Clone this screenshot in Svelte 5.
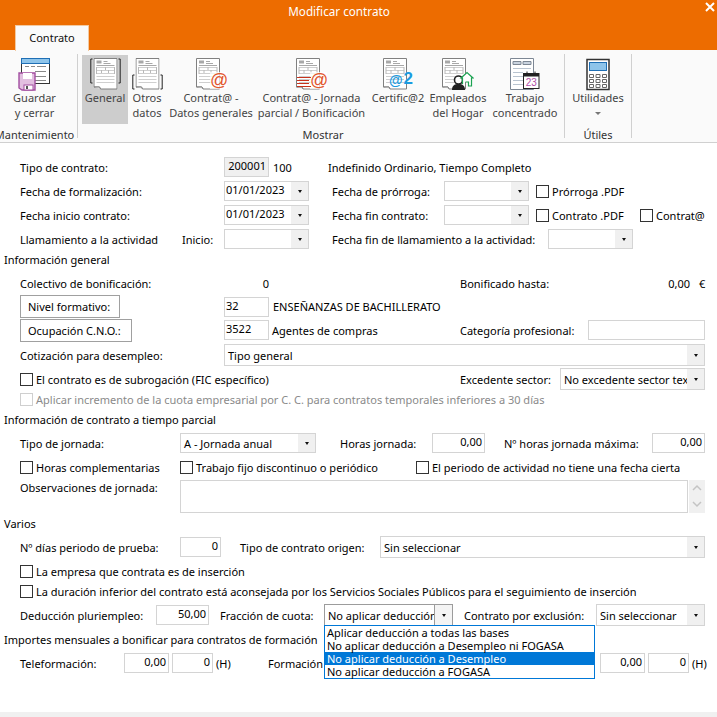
<script>
  const docLines = [9, 12, 15, 18, 21, 24];
  const options = [
    'Aplicar deducción a todas las bases',
    'No aplicar deducción a Desempleo ni FOGASA',
    'No aplicar deducción a Desempleo',
    'No aplicar deducción a FOGASA'
  ];
  let selected = 2;
</script>

{#snippet combo(value, cls)}
  <div class="combo {cls}">
    <span class="val">{value}</span>
    <span class="arr"><i></i></span>
  </div>
{/snippet}

{#snippet check(label, cls = '', disabled = false)}
  <label class="check {cls}" class:off={disabled}>
    <input type="checkbox" {disabled} />
    <span>{label}</span>
  </label>
{/snippet}

<svg class="defs" aria-hidden="true">
  <symbol id="doc" viewBox="0 0 24 32">
    <path d="M.5.5h23v30.500H7l-1-2H.5z" fill="#fff" stroke="#808080" />
    <path d="M.5 29H6l1 2" fill="#e8e8e8" stroke="#808080" />
    <rect x="3" y="2.500" width="5" height="3" fill="#a8a8a8" />
    <path d="M10 3.500h4M10 5.500h7M3 7.500h18" stroke="#a8a8a8" />
    {#each docLines as y}
      <path d="M3 {y + 0.5}h18" stroke="#cfcfcf" />
    {/each}
    <path d="M3 9v7M21 9v7M12 9v3M8 12v3M15 12v3" stroke="#b8b8b8" />
  </symbol>
</svg>

<div class="app">
  <header class="top">
    <div class="title">Modificar contrato</div>
    <svg class="close" viewBox="0 0 10 10" aria-label="Cerrar">
      <path d="M1 1l8 8M9 1l-8 8" stroke="#fff" stroke-width="2" />
    </svg>
    <div class="tabs"><div class="tab">Contrato</div></div>
  </header>

  <section class="ribbon">
    <div class="group g-mant">
      <div class="btns">
        <div class="rb b-guardar">
          <svg width="33" height="34" viewBox="0 0 33 34">
            <rect x="3.500" y="1.500" width="28" height="25" fill="#fff" stroke="#333" />
            <rect x="3.500" y="1.500" width="28" height="5" fill="#8ec4ea" stroke="#1f6fb5" />
            <path d="M7 9.500h4M13 9.500h4M19 9.500h9M17 14.500h11M17 19.500h11M17 23.500h11" stroke="#888" />
            <path d="M1 16h16v17H4l-3-2z" fill="#e2bfe0" stroke="#a24ea0" stroke-width="1.400" />
            <rect x="5" y="16" width="9" height="6" fill="#fff" />
            <rect x="6" y="28" width="9" height="5" fill="#fff" stroke="#a24ea0" />
            <rect x="8" y="29" width="2" height="3" fill="#555" />
          </svg>
          <span>Guardar<br />y cerrar</span>
        </div>
      </div>
      <div class="glabel">Mantenimiento</div>
    </div>

    <div class="group g-most">
      <div class="btns">
        <div class="rb b-general active">
          <svg width="31" height="34" viewBox="0 0 31 34">
            <use href="#doc" x="3.500" y="1" width="24" height="32" />
            <path d="M2.500 2H.8v24h1.700M28.500 2h1.700v24h-1.700" fill="none" stroke="#222" />
          </svg>
          <span>General</span>
        </div>
        <div class="rb b-otros">
          <svg width="31" height="34" viewBox="0 0 31 34">
            <use href="#doc" x="3.500" y="1" width="24" height="32" />
            <path d="M2.500 18H.8v14h1.700M28.500 18h1.700v14h-1.700" fill="none" stroke="#222" />
          </svg>
          <span>Otros<br />datos</span>
        </div>
        <div class="rb b-datos">
          <svg width="31" height="34" viewBox="0 0 31 34">
            <use href="#doc" x="0" y="1" width="24" height="32" />
            <rect x="14" y="15" width="17" height="17" fill="#fff" opacity=".7" />
            <text x="14" y="29" class="at">@</text>
          </svg>
          <span>Contrat@ -<br />Datos generales</span>
        </div>
        <div class="rb b-jornada">
          <svg width="31" height="34" viewBox="0 0 31 34">
            <use href="#doc" x="0" y="1" width="24" height="32" />
            <rect x="14" y="15" width="17" height="17" fill="#fff" opacity=".7" />
            <path d="M1 20.500h14M1 23.500h12M1 26.500h12M1 29.500h14" stroke="#c8331d" />
            <text x="14" y="29" class="at">@</text>
          </svg>
          <span>Contrat@ - Jornada<br />parcial / Bonificación</span>
        </div>
        <div class="rb b-cert">
          <svg width="31" height="34" viewBox="0 0 31 34">
            <use href="#doc" x="0" y="1" width="24" height="32" />
            <text x="6" y="28" class="at2">@</text>
            <text x="20.500" y="27" class="two">2</text>
          </svg>
          <span>Certific@2</span>
        </div>
        <div class="rb b-emp">
          <svg width="32" height="34" viewBox="0 0 32 34">
            <use href="#doc" x="0" y="1" width="24" height="32" />
            <circle cx="16.500" cy="23" r="4" fill="#fff" stroke="#222" stroke-width="1.600" />
            <path d="M10 33c0-5 3-6 6.500-6s6.500 1 6.500 6z" fill="#222" />
            <path d="M20.500 27v-6H19l6-5.500 6 5.500h-1.500v8h-3v-4h-3" fill="#fff" stroke="#1aa251" stroke-width="1.200" />
          </svg>
          <span>Empleados<br />del Hogar</span>
        </div>
        <div class="rb b-trab">
          <svg width="30" height="34" viewBox="0 0 30 34">
            <path d="M.5 1.500h23v31H.5z" fill="#fff" stroke="#7d8794" />
            <path d="M3 4.500h8v3H3zM13 4.500h8v3h-8z" fill="#c9d3df" stroke="#7d8794" />
            <path d="M3 11.500h18M3 15.500h10M3 19.500h10M3 23.500h10M3 27.500h10" stroke="#b9c4d0" />
            <rect x="13.500" y="16.500" width="15.500" height="15" fill="#fff" stroke="#222" />
            <rect x="13.500" y="16.500" width="15.500" height="3" fill="#222" />
            <path d="M17 14.500v3M25 14.500v3" stroke="#222" />
            <text x="21.300" y="29" class="cal">23</text>
          </svg>
          <span>Trabajo<br />concentrado</span>
        </div>
      </div>
      <div class="glabel">Mostrar</div>
    </div>

    <div class="group g-util">
      <div class="btns">
        <div class="rb b-util">
          <svg width="24" height="34" viewBox="0 0 24 34">
            <rect x="1" y="2.500" width="22" height="30" fill="#fff" stroke="#333" stroke-width="1.500" />
            <rect x="3.500" y="5.500" width="17" height="8" fill="#8ec4ea" stroke="#1f6fb5" />
            <path d="M3.500 17.500h4v3h-4zM10 17.500h4v3h-4zM16.500 17.500h4v3h-4zM3.500 22.500h4v3h-4zM10 22.500h4v3h-4zM16.500 22.500h4v3h-4zM3.500 27.500h4v3h-4zM10 27.500h4v3h-4zM16.500 27.500h4v3h-4z" fill="#fff" stroke="#666" />
          </svg>
          <span>Utilidades</span>
          <i class="more"></i>
        </div>
      </div>
      <div class="glabel">Útiles</div>
    </div>
  </section>

  <main class="form">
    <div class="row">
      <span class="w204">Tipo de contrato:</span>
      <div class="field ro w45 tr">200001</div>
      <span class="ml4 w55">100</span>
      <span>Indefinido Ordinario, Tiempo Completo</span>
    </div>
    <div class="row">
      <span class="w204">Fecha de formalización:</span>
      {@render combo('01/01/2023', 'w85')}
      <span class="ml23 w112">Fecha de prórroga:</span>
      {@render combo('', 'w85')}
      {@render check('Prórroga .PDF', 'ml7')}
    </div>
    <div class="row">
      <span class="w204">Fecha inicio contrato:</span>
      {@render combo('01/01/2023', 'w85')}
      <span class="ml23 w112">Fecha fin contrato:</span>
      {@render combo('', 'w85')}
      {@render check('Contrato .PDF', 'ml7 w104')}
      {@render check('Contrat@')}
    </div>
    <div class="row">
      <span class="w162">Llamamiento a la actividad</span>
      <span class="w42">Inicio:</span>
      {@render combo('', 'w85')}
      <span class="ml23 w216">Fecha fin de llamamiento a la actividad:</span>
      {@render combo('', 'w85')}
    </div>

    <h2 class="head">Información general</h2>
    <div class="row">
      <span class="w204">Colectivo de bonificación:</span>
      <span class="w45 num">0</span>
      <span class="ml191 w208">Bonificado hasta:</span>
      <span class="w22 num">0,00</span>
      <span class="ml9">€</span>
    </div>
    <div class="row r23">
      <div class="lookup w100">Nivel formativo:</div>
      <div class="field ml104 w45">32</div>
      <span class="ml4">ENSEÑANZAS DE BACHILLERATO</span>
    </div>
    <div class="row">
      <div class="lookup w112">Ocupación C.N.O.:</div>
      <div class="field ml92 w45">3522</div>
      <span class="ml3 w188">Agentes de compras</span>
      <span class="w128">Categoría profesional:</span>
      <div class="field w117"></div>
    </div>
    <div class="row mt1">
      <span class="w204">Cotización para desempleo:</span>
      {@render combo('Tipo general', 'w481 tall')}
    </div>
    <div class="row">
      {@render check('El contrato es de subrogación (FIC específico)', 'w440')}
      <span class="w100">Excedente sector:</span>
      {@render combo('No excedente sector tex', 'w145 tall')}
    </div>
    <div class="row r16">
      {@render check('Aplicar incremento de la cuota empresarial por C. C. para contratos temporales inferiores a 30 días', '', true)}
    </div>

    <h2 class="head mt4">Información de contrato a tiempo parcial</h2>
    <div class="row">
      <span class="w160">Tipo de jornada:</span>
      {@render combo('A - Jornada anual', 'w136 pad')}
      <span class="ml24 w92">Horas jornada:</span>
      <div class="field w53 tr">0,00</div>
      <span class="ml19 w148">Nº horas jornada máxima:</span>
      <div class="field w53 tr">0,00</div>
    </div>
    <div class="row">
      {@render check('Horas complementarias', 'w160')}
      {@render check('Trabajo fijo discontinuo o periódico', 'w236')}
      {@render check('El periodo de actividad no tiene una fecha cierta')}
    </div>
    <div class="row obs">
      <span class="w160">Observaciones de jornada:</span>
      <div class="area"></div>
      <div class="scroll">
        <svg width="16" height="32" viewBox="0 0 16 32">
          <path d="M4 10l4-4 4 4M4 22l4 4 4-4" fill="none" stroke="#c4c4c4" stroke-width="1.500" />
        </svg>
      </div>
    </div>

    <h2 class="head mt2">Varios</h2>
    <div class="row">
      <span class="w160">Nº días periodo de prueba:</span>
      <div class="field w41 tr">0</div>
      <span class="ml19 w140">Tipo de contrato origen:</span>
      {@render combo('Sin seleccionar', 'w325 tall')}
    </div>
    <div class="row">
      {@render check('La empresa que contrata es de inserción')}
    </div>
    <div class="row r16">
      {@render check('La duración inferior del contrato está aconsejada por los Servicios Sociales Públicos para el seguimiento de inserción')}
    </div>
    <div class="row mt4">
      <span class="w136">Deducción pluriempleo:</span>
      <div class="field w53 tr">50,00</div>
      <span class="ml11 w104">Fracción de cuota:</span>
      <div class="pick">
        {@render combo('No aplicar deducción', 'w129 tall focus')}
        <ul class="menu">
          {#each options as opt, i}
            <li class:sel={i === selected}>{opt}</li>
          {/each}
        </ul>
      </div>
      <span class="ml11 w132">Contrato por exclusión:</span>
      {@render combo('Sin seleccionar', 'w109 tall')}
    </div>

    <h2 class="head mt4">Importes mensuales a bonificar para contratos de formación</h2>
    <div class="row mt3">
      <span class="w104">Teleformación:</span>
      <div class="field w45 tr">0,00</div>
      <div class="field ml3 w41 tr">0</div>
      <span class="ml3 w52">(H)</span>
      <span class="w54">Formación</span>
      <div class="field ml278 w45 tr">0,00</div>
      <div class="field ml3 w41 tr">0</div>
      <span class="ml3">(H)</span>
    </div>
  </main>

  <footer class="bottom"></footer>
</div>

<style>
  :global(body) {
    margin: 0;
    background: #fff;
  }
  .defs {
    position: absolute;
    width: 0;
    height: 0;
  }
  .app {
    width: 717px;
    height: 717px;
    overflow: hidden;
    display: flex;
    flex-direction: column;
    font-family: "Noto Sans", "Open Sans", sans-serif;
    font-size: 11px;
    color: #000;
  }

  /* title bar */
  .top {
    position: relative;
    height: 50px;
    flex: none;
    background: #ed6c00;
  }
  .title {
    height: 23px;
    padding-right: 39px;
    line-height: 22px;
    text-align: center;
    font-size: 11.7px;
    color: #fff;
  }
  .close {
    position: absolute;
    top: 2px;
    right: 2px;
    width: 10px;
    height: 10px;
  }
  .tabs {
    padding: 2px 0 0 15px;
  }
  .tab {
    width: 72px;
    height: 25px;
    line-height: 24px;
    text-align: center;
    font-size: 11px;
    background: #fafafa;
    border: 1px solid #f3c9a0;
    border-bottom: 0;
    color: #111;
  }

  /* ribbon */
  .ribbon {
    display: flex;
    height: 93px;
    flex: none;
    box-sizing: border-box;
    background: #fafafa;
    border-bottom: 1px solid #d0d0d0;
    padding-top: 4px;
  }
  .group {
    display: flex;
    flex-direction: column;
    align-items: center;
    height: 84px;
    box-sizing: border-box;
    border-right: 1px solid #d0d0d0;
  }
  .g-mant { width: 78px; padding-right: 8px; }
  .g-most { width: 487px; padding-left: 4px; align-items: stretch; }
  .g-util { width: 67px; }
  .btns {
    display: flex;
    height: 69px;
    padding-top: 1px;
  }
  .rb {
    display: flex;
    flex-direction: column;
    align-items: center;
    height: 69px;
    padding-top: 2px;
    box-sizing: border-box;
    line-height: 15px;
    text-align: center;
    white-space: nowrap;
    color: #444;
  }
  .rb svg { display: block; flex: none; margin-bottom: -1px; }
  .rb.active { background: #cdcdcd; }
  .b-guardar { width: 68px; }
  .b-general { width: 46px; }
  .b-otros { width: 38px; }
  .b-datos { width: 90px; }
  .b-jornada { width: 111px; }
  .b-cert { width: 62px; }
  .b-emp { width: 58px; }
  .b-trab { width: 76px; }
  .b-util { width: 66px; }
  .more {
    width: 0;
    height: 0;
    margin-top: 7px;
    border: 3px solid transparent;
    border-top: 3px solid #777;
    border-bottom: 0;
  }
  .glabel {
    height: 16px;
    margin-top: 3px;
    line-height: 16px;
    text-align: center;
    white-space: nowrap;
    color: #333;
  }
  .at {
    font: 18px "Liberation Sans", sans-serif;
    fill: #e2562c;
  }
  .at2 {
    font: bold 14px "Liberation Sans", sans-serif;
    fill: #1b9be0;
  }
  .two {
    font: bold 17px "Liberation Sans", sans-serif;
    fill: #1b9be0;
  }
  .cal {
    font: 10px "Liberation Sans", sans-serif;
    fill: #b04fa8;
    text-anchor: middle;
  }

  /* form */
  .form {
    flex: 1;
    min-height: 0;
    padding-top: 12px;
  }
  .row {
    display: flex;
    align-items: center;
    height: 24px;
    padding-left: 20px;
    white-space: nowrap;
  }
  .r23 { height: 23px; }
  .r16 { height: 16px; }
  .obs {
    height: 34px;
    align-items: flex-start;
    padding-top: 1px;
    box-sizing: border-box;
  }
  .head {
    width: fit-content;
    height: 16px;
    margin: 0 0 4px;
    padding-left: 4px;
    font-size: 11px;
    font-weight: 400;
    line-height: 17px;
  }
  .field, .combo, .area, .lookup {
    box-sizing: border-box;
    background: #fff;
    border: 1px solid #d4d4d4;
  }
  .field {
    height: 20px;
    padding: 0 1px;
    line-height: 15px;
    overflow: hidden;
  }
  .ro { background: #f0f0f0; }
  .tr { text-align: right; padding-right: 2px; }
  .num { text-align: right; }
  .combo {
    display: flex;
    height: 20px;
    line-height: 15px;
  }
  .tall { height: 22px; line-height: 21px; }
  .focus { border-color: #9c9c9c; }
  .val {
    flex: 1;
    min-width: 0;
    padding-left: 1px;
    overflow: hidden;
  }
  .tall .val, .pad .val { padding-left: 3px; }
  .pad { line-height: 19px; }
  .arr {
    display: flex;
    align-items: center;
    justify-content: center;
    flex: none;
    width: 17px;
    background: #f0f0f0;
  }
  .focus .arr { border-left: 1px solid #9c9c9c; background: #f4f4f4; }
  .arr i {
    width: 0;
    height: 0;
    border: 2.5px solid transparent;
    border-top: 3px solid #111;
    border-bottom: 0;
  }
  .lookup {
    height: 23px;
    padding-left: 7px;
    line-height: 21px;
    border-color: #a0a0a0;
  }
  .area {
    width: 508px;
    height: 33px;
  }
  .scroll {
    width: 16px;
    height: 33px;
    margin-left: 1px;
    background: #f0f0f0;
  }
  .scroll svg { display: block; }
  .check {
    display: flex;
    align-items: center;
  }
  .check input {
    appearance: none;
    width: 13px;
    height: 13px;
    margin: 0 3px 0 0;
    background: #fff;
    border: 1px solid #333;
    box-sizing: border-box;
    flex: none;
  }
  .check.off { color: #8a8a8a; }
  .check.off input { border-color: #cfcfcf; }

  .pick { position: relative; }
  .menu {
    position: absolute;
    top: 21px;
    left: 0;
    z-index: 2;
    width: 271px;
    margin: 0;
    padding: 0;
    box-sizing: border-box;
    list-style: none;
    background: #fff;
    border: 1px solid #0078d7;
  }
  .menu li {
    height: 12px;
    padding: 1px 0 0 2px;
    line-height: 12px;
  }
  .menu .sel {
    background: #0078d7;
    color: #fff;
  }
  .bottom {
    height: 5px;
    flex: none;
    background: #f0f0f0;
  }

  .mt1 { margin-top: 1px; }
  .mt2 { margin-top: 2px; }
  .mt3 { margin-top: 3px; }
  .mt4 { margin-top: 4px; }
  .ml3 { margin-left: 3px; }
  .ml4 { margin-left: 4px; }
  :global(.ml7) { margin-left: 7px; }
  .ml9 { margin-left: 9px; }
  .ml11 { margin-left: 11px; }
  .ml19 { margin-left: 19px; }
  .ml23 { margin-left: 23px; }
  .ml24 { margin-left: 24px; }
  .ml92 { margin-left: 92px; }
  .ml104 { margin-left: 104px; }
  .ml191 { margin-left: 191px; }
  .ml278 { margin-left: 278px; }
  .w22 { width: 22px; }
  .w41 { width: 41px; }
  .w42 { width: 42px; }
  .w45 { width: 45px; }
  .w52 { width: 52px; }
  .w53 { width: 53px; }
  .w54 { width: 54px; }
  .w55 { width: 55px; }
  :global(.w85) { width: 85px; }
  .w92 { width: 92px; }
  .w100 { width: 100px; }
  :global(.w104) { width: 104px; }
  :global(.w109) { width: 109px; }
  .w112 { width: 112px; }
  .w117 { width: 117px; }
  .w128 { width: 128px; }
  :global(.w129) { width: 129px; }
  .w132 { width: 132px; }
  :global(.w136) { width: 136px; }
  .w140 { width: 140px; }
  :global(.w145) { width: 145px; }
  .w148 { width: 148px; }
  :global(.w160) { width: 160px; }
  .w162 { width: 162px; }
  .w188 { width: 188px; }
  .w204 { width: 204px; }
  .w208 { width: 208px; }
  .w216 { width: 216px; }
  :global(.w236) { width: 236px; }
  :global(.w325) { width: 325px; }
  :global(.w440) { width: 440px; }
  :global(.w481) { width: 481px; }
</style>
